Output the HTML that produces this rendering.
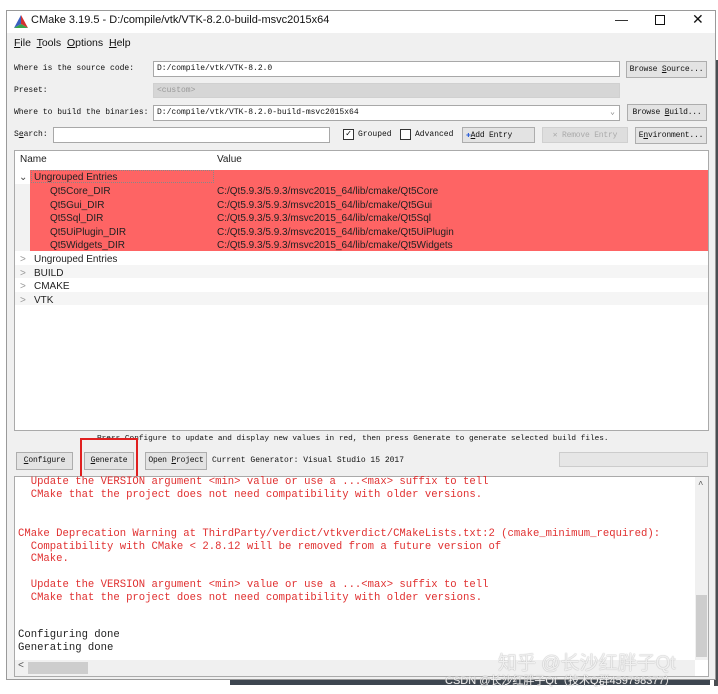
<!DOCTYPE html>
<html><head><meta charset="utf-8"><style>
*{margin:0;padding:0;box-sizing:border-box}
body{width:718px;height:694px;background:#fff;position:relative;overflow:hidden;font-family:"Liberation Mono",monospace}
.a{position:absolute;white-space:pre}
.win{position:absolute;left:6px;top:10px;width:710px;height:670px;background:#f0f0f0;border:1px solid #9a9a9a}
.lbl{font-size:8px;color:#111}
.inp{position:absolute;background:#fff;border:1px solid #a8a8a8;font-size:8px;padding:2px 3px;color:#111;white-space:nowrap}
.btn{position:absolute;background:#e3e3e3;border:1px solid #adadad;font-size:8px;color:#111;text-align:center;line-height:15px;white-space:nowrap;overflow:hidden;letter-spacing:-0.2px}
.tree{font-family:"Liberation Sans",sans-serif;font-size:10px;color:#222}
.out{font-size:10.6px;color:#e03030}
</style></head><body>
<div class="a" style="left:0;top:0;width:718px;height:10px;background:#fff"></div>
<div class="a" style="left:714px;top:60px;width:4px;height:626px;background:#4a4e52"></div>
<div class="a" style="left:230px;top:680px;width:480px;height:5px;background:#3d4650"></div>
<div class="win"></div>
<div class="a" style="left:7px;top:11px;width:708px;height:22px;background:#fff"></div>
<svg class="a" style="left:14px;top:15px" width="14" height="13" viewBox="0 0 14 13"><polygon points="7,0 0,13 7,9" fill="#3b5fc0"/><polygon points="7,0 14,13 7,9" fill="#d32f2f"/><polygon points="0,13 14,13 7,9" fill="#37a34a"/></svg>
<div class="a" style="left:31px;top:14px;font-family:'Liberation Sans',sans-serif;font-size:11px;color:#111">CMake 3.19.5 - D:/compile/vtk/VTK-8.2.0-build-msvc2015x64</div>
<div class="a" style="left:615px;top:12px;font-family:'Liberation Sans',sans-serif;font-size:13px;color:#111">—</div>
<div class="a" style="left:655px;top:15px;width:10px;height:10px;border:1px solid #111"></div>
<div class="a" style="left:692px;top:11px;font-family:'Liberation Sans',sans-serif;font-size:14px;color:#111">✕</div>
<div class="a" style="left:14px;top:37px;font-family:'Liberation Sans',sans-serif;font-size:10.5px;color:#111"><u>F</u>ile  <u>T</u>ools  <u>O</u>ptions  <u>H</u>elp</div>

<div class="a lbl" style="left:14px;top:64px">Where is the source code:</div>
<div class="inp" style="left:153px;top:61px;width:467px;height:16px">D:/compile/vtk/VTK-8.2.0</div>
<div class="btn" style="left:626px;top:61px;width:81px;height:17px">Browse <u>S</u>ource...</div>
<div class="a lbl" style="left:14px;top:86px">Preset:</div>
<div class="inp" style="left:153px;top:83px;width:467px;height:15px;background:#d6d6d6;border-color:#d0d0d0;color:#999">&lt;custom&gt;</div>
<div class="a lbl" style="left:14px;top:108px">Where to build the binaries:</div>
<div class="inp" style="left:153px;top:105px;width:467px;height:16px">D:/compile/vtk/VTK-8.2.0-build-msvc2015x64<span style="position:absolute;right:4px;top:1px;color:#777">⌄</span></div>
<div class="btn" style="left:627px;top:104px;width:80px;height:17px">Browse <u>B</u>uild...</div>
<div class="a lbl" style="left:14px;top:130px">S<u>e</u>arch:</div>
<div class="inp" style="left:53px;top:127px;width:277px;height:16px"></div>
<div class="a" style="left:343px;top:129px;width:11px;height:11px;border:1px solid #333;background:#fff;font-size:9px;line-height:9px;text-align:center">✓</div>
<div class="a lbl" style="left:358px;top:130px">Grouped</div>
<div class="a" style="left:400px;top:129px;width:11px;height:11px;border:1px solid #333;background:#fff"></div>
<div class="a lbl" style="left:415px;top:130px">Advanced</div>
<div class="btn" style="left:462px;top:127px;width:73px;height:16px;text-align:left;padding-left:3px"><span style="color:#2b5fd9;font-weight:bold">✚</span><u>A</u>dd Entry</div>
<div class="btn" style="left:542px;top:127px;width:86px;height:16px;color:#aaa;background:#dedede;border-color:#d0d0d0">✕ Remove Entry</div>
<div class="btn" style="left:635px;top:127px;width:72px;height:17px">E<u>n</u>vironment...</div>

<div class="a" style="left:14px;top:150px;width:695px;height:281px;background:#fff;border:1px solid #aaa"></div>
<div class="a tree" style="left:20px;top:154px">Name</div>
<div class="a tree" style="left:217px;top:154px">Value</div>
<div class="a" style="left:30px;top:170px;width:678px;height:81px;background:#fe6464"></div>
<div class="a" style="left:15px;top:184px;width:15px;height:67px;background:#f2f2f2"></div>
<div class="a" style="left:31px;top:170px;width:183px;height:13px;border:1px dotted #888"></div>
<div class="a tree" style="left:19px;top:172px;color:#444">⌄</div>
<div class="a tree" style="left:34px;top:172px;color:#222">Ungrouped Entries</div>
<div class="a tree" style="left:50px;top:185px;line-height:13.5px">Qt5Core_DIR
Qt5Gui_DIR
Qt5Sql_DIR
Qt5UiPlugin_DIR
Qt5Widgets_DIR</div>
<div class="a tree" style="left:217px;top:185px;line-height:13.5px">C:/Qt5.9.3/5.9.3/msvc2015_64/lib/cmake/Qt5Core
C:/Qt5.9.3/5.9.3/msvc2015_64/lib/cmake/Qt5Gui
C:/Qt5.9.3/5.9.3/msvc2015_64/lib/cmake/Qt5Sql
C:/Qt5.9.3/5.9.3/msvc2015_64/lib/cmake/Qt5UiPlugin
C:/Qt5.9.3/5.9.3/msvc2015_64/lib/cmake/Qt5Widgets</div>
<div class="a" style="left:15px;top:265px;width:693px;height:13px;background:#f5f5f5"></div>
<div class="a" style="left:15px;top:292px;width:693px;height:13px;background:#f5f5f5"></div>
<div class="a tree" style="left:20px;top:253px;line-height:13.5px;color:#999">&gt;
&gt;
&gt;
&gt;</div>
<div class="a tree" style="left:34px;top:253px;line-height:13.5px">Ungrouped Entries
BUILD
CMAKE
VTK</div>

<div class="a" style="left:97px;top:435px;font-size:7.75px;color:#111">Press Configure to update and display new values in red, then press Generate to generate selected build files.</div>
<div class="btn" style="left:16px;top:452px;width:57px;height:18px;line-height:16px"><u>C</u>onfigure</div>
<div class="btn" style="left:84px;top:452px;width:50px;height:18px;line-height:16px"><u>G</u>enerate</div>
<div class="btn" style="left:145px;top:452px;width:62px;height:18px;line-height:16px">Open <u>P</u>roject</div>
<div class="a lbl" style="left:212px;top:456px">Current Generator: Visual Studio 15 2017</div>
<div class="a" style="left:559px;top:452px;width:149px;height:15px;background:#e6e6e6;border:1px solid #ccc"></div>
<div class="a" style="left:80px;top:438px;width:58px;height:40px;border:2px solid #e02020"></div>

<div class="a" style="left:14px;top:476px;width:695px;height:201px;background:#fff;border:1px solid #aaa"></div>
<div class="a out" style="left:18px;top:476px;line-height:12.9px">  Update the VERSION argument &lt;min&gt; value or use a ...&lt;max&gt; suffix to tell
  CMake that the project does not need compatibility with older versions.


CMake Deprecation Warning at ThirdParty/verdict/vtkverdict/CMakeLists.txt:2 (cmake_minimum_required):
  Compatibility with CMake &lt; 2.8.12 will be removed from a future version of
  CMake.

  Update the VERSION argument &lt;min&gt; value or use a ...&lt;max&gt; suffix to tell
  CMake that the project does not need compatibility with older versions.</div>
<div class="a out" style="left:18px;top:629px;line-height:13px;color:#222">Configuring done
Generating done</div>
<div class="a" style="left:695px;top:477px;width:13px;height:183px;background:#f0f0f0"></div>
<div class="a" style="left:696px;top:595px;width:11px;height:62px;background:#cdcdcd"></div>
<div class="a" style="left:698px;top:480px;font-size:9px;color:#555">^</div>
<div class="a" style="left:15px;top:660px;width:680px;height:16px;background:#f0f0f0"></div>
<div class="a" style="left:28px;top:662px;width:60px;height:12px;background:#cdcdcd"></div>
<div class="a" style="left:18px;top:661px;font-size:10px;color:#555">&lt;</div>
<div class="a" style="left:498px;top:648px;font-family:'Liberation Sans','Noto Sans CJK SC',sans-serif;font-size:19px;color:rgba(255,255,255,0.85);text-shadow:0 0 1px #888">知乎 @长沙红胖子Qt</div>
<div class="a" style="left:445px;top:672px;font-family:'Liberation Sans','Noto Sans CJK SC',sans-serif;font-size:11px;color:rgba(255,255,255,0.9);text-shadow:0 0 1px #777">CSDN @长沙红胖子Qt（技术Q群459798377）</div>
</body></html>
